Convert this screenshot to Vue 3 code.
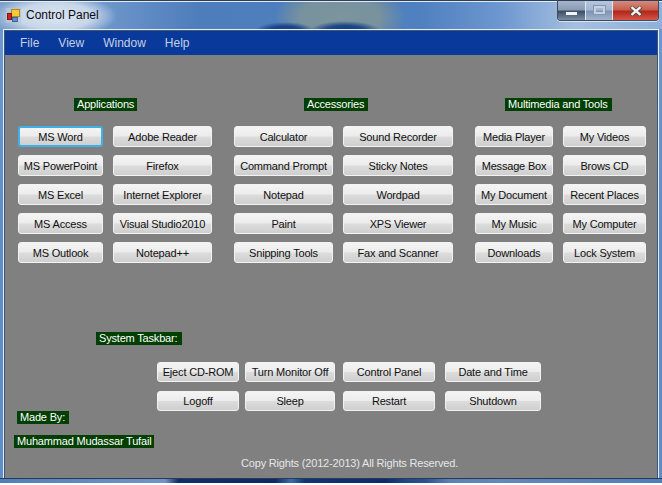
<script setup>
const groups = [
  { name: 'apps', title: 'Applications', items: ['MS Word', 'Adobe Reader', 'MS PowerPoint', 'Firefox', 'MS Excel', 'Internet Explorer', 'MS Access', 'Visual Studio2010', 'MS Outlook', 'Notepad++'] },
  { name: 'acc', title: 'Accessories', items: ['Calculator', 'Sound Recorder', 'Command Prompt', 'Sticky Notes', 'Notepad', 'Wordpad', 'Paint', 'XPS Viewer', 'Snipping Tools', 'Fax and Scanner'] },
  { name: 'media', title: 'Multimedia and Tools', items: ['Media Player', 'My Videos', 'Message Box', 'Brows CD', 'My Document', 'Recent Places', 'My Music', 'My Computer', 'Downloads', 'Lock System'] }
]
const menus = ['File', 'View', 'Window', 'Help']
const task = ['Eject CD-ROM', 'Turn Monitor Off', 'Control Panel', 'Date and Time', 'Logoff', 'Sleep', 'Restart', 'Shutdown']
</script>

<template>
  <div class="window">
    <header class="titlebar">
      <svg class="appicon" width="15" height="15" viewBox="0 0 15 15">
        <path d="M0.5 0.5H14.5V14.5H0.5Z M0.5 5H14.5 M5 0.5V14.5 M0.5 10H14.5 M10 0.5V14.5" fill="#c4d0de" fill-opacity="0.5" stroke="#b9c4d2" stroke-width="1" />
        <rect x="5.5" y="1.5" width="8" height="7" fill="#f7cb36" stroke="#b58420" stroke-width="1" />
        <rect x="1.5" y="5.5" width="4" height="6" fill="#cc241c" stroke="#7a1a14" stroke-width="1" />
        <rect x="6.5" y="9.5" width="5" height="4" fill="#5b8fd8" stroke="#3a659f" stroke-width="1" />
      </svg>
      <span class="title">Control Panel</span>
      <div class="controls">
        <div class="ctl min"><i></i></div>
        <div class="ctl max"><i></i></div>
        <div class="ctl close">
          <svg width="14" height="10" viewBox="0 0 14 10">
            <path d="M2 1 L12 9 M12 1 L2 9" stroke="#4a4a4a" stroke-width="4" />
            <path d="M2.5 1.2 L11.5 8.8 M11.5 1.2 L2.5 8.8" stroke="#f4f4f4" stroke-width="2.4" />
          </svg>
        </div>
      </div>
    </header>
    <div class="client">
      <nav class="menubar">
        <span v-for="m in menus" :key="m" class="menu">{{ m }}</span>
      </nav>
      <main class="form">
        <section class="groups">
          <div v-for="g in groups" :key="g.name" :class="['group', g.name]">
            <span class="tag">{{ g.title }}</span>
            <div class="grid">
              <button v-for="b in g.items" :key="b" :class="['btn', { focus: b === 'MS Word' }]">{{ b }}</button>
            </div>
          </div>
        </section>
        <span class="tag systag">System Taskbar:</span>
        <section class="lower">
          <div class="credits">
            <span class="tag made">Made By:</span>
            <span class="tag author">Muhammad Mudassar Tufail</span>
          </div>
          <div class="taskgrid">
            <button v-for="b in task" :key="b" class="btn">{{ b }}</button>
          </div>
        </section>
        <p class="copy">Copy Rights (2012-2013) All Rights Reserved.</p>
      </main>
    </div>
    <div class="bottomedge"></div>
  </div>
</template>

<style>
html, body { margin: 0; padding: 0; background: #fff; }
</style>

<style scoped>
.window {
  width: 662px;
  height: 485px;
  overflow: hidden;
  display: flex;
  flex-direction: column;
  font-family: "Liberation Sans", Arial, sans-serif;
  font-size: 11px;
  letter-spacing: -0.18px;
  background: linear-gradient(#6f9ad0 0, #5f8dc8 50%, #5f8dc8 100%);
  box-sizing: border-box;
}
.titlebar {
  height: 29px;
  flex: none;
  display: flex;
  align-items: flex-start;
  padding-left: 6px;
  border-top: 1px solid #2a3f5c;
  box-shadow: inset 0 1px 0 #e4ecf6;
  box-sizing: border-box;
  background:
    radial-gradient(ellipse 30px 9px at 285px 30px, #0f3c84 0, rgba(15, 60, 132, 0.85) 55%, rgba(15, 60, 132, 0) 100%),
    radial-gradient(ellipse 36px 10px at 345px 30px, #0e3b82 0, rgba(14, 59, 130, 0.85) 55%, rgba(14, 59, 130, 0) 100%),
    radial-gradient(ellipse 66px 34px at 340px 16px, #7b949e 0, #78929e 60%, rgba(120, 146, 158, 0) 100%),
    radial-gradient(ellipse 62px 22px at 55px 15px, #dbe6f2 0, #c7d6e8 60%, rgba(199, 214, 232, 0) 100%),
    linear-gradient(90deg, #7ea1cc 0, #6f97cb 100px, #4d7dbb 200px, #4f80bf 420px, #6d97cf 500px, #a5bfe0 575px, #8fb0da 100%);
}
.appicon { margin-top: 7px; flex: none; }
.title {
  margin-left: 5px;
  margin-top: 7px;
  color: #0b0b14;
  font-size: 12px;
  letter-spacing: 0;
  line-height: 15px;
}
.controls {
  margin-left: auto;
  margin-right: 3px;
  width: 102px;
  height: 20px;
  display: flex;
  border: 1px solid #3f4a5a;
  border-top: none;
  border-radius: 0 0 4px 4px;
  box-sizing: border-box;
  overflow: hidden;
  box-shadow: 0 1px 0 rgba(255, 255, 255, 0.6);
}
.ctl { display: flex; align-items: center; justify-content: center; border-right: 1px solid #dfe6ef; box-sizing: border-box; }
.min { width: 28px; background: linear-gradient(#a5b4c8 0, #8b9db4 45%, #3e5068 55%, #7a8ca4 100%); }
.min i { width: 11px; height: 3px; background: #f4f4f4; margin-top: 6px; }
.max { width: 27px; background: linear-gradient(#b5c6dc 0, #a3b7d2 45%, #7d94b4 55%, #9fb3cf 100%); }
.max i { width: 7px; height: 4px; border: 2px solid #c6d0de; outline: 1px solid #8296b0; box-sizing: content-box; margin-bottom: 2px; }
.close { flex: 1; border-right: none; background: linear-gradient(#d58a7e 0, #c9604f 45%, #b0281a 55%, #d4574a 100%); }
.client {
  flex: 1;
  margin: 0 3px;
  border: 1px solid #e6edf6;
  border-bottom: none;
  display: flex;
  flex-direction: column;
  min-height: 0;
  box-sizing: border-box;
  box-shadow: inset 0 0 0 1px #3d5674;
}
.menubar {
  height: 24px;
  flex: none;
  margin: 1px 1px 0;
  background: #0a399c;
  display: flex;
  align-items: center;
  padding-left: 15px;
  gap: 19px;
  color: #c3d0e4;
  font-size: 12px;
  letter-spacing: 0;
}
.form {
  flex: 1;
  margin: 0 1px;
  background: #808080;
  display: flex;
  flex-direction: column;
  align-items: flex-start;
  padding-top: 43px;
  min-height: 0;
}
.groups { display: flex; padding-left: 13px; gap: 22px; }
.group { display: flex; flex-direction: column; align-items: flex-start; }
.tag {
  display: block;
  height: 13px;
  line-height: 13px;
  background: #003f00;
  color: #fff;
  white-space: nowrap;
  padding: 0 3px;
  box-sizing: border-box;
}
.apps .tag { margin-left: 56px; width: 63px; }
.acc .tag { margin-left: 70px; width: 64px; }
.media .tag { margin-left: 30px; width: 107px; }
.grid {
  display: grid;
  margin-top: 15px;
  grid-auto-rows: 21px;
  row-gap: 8px;
  column-gap: 10px;
}
.apps .grid { grid-template-columns: 85px 99px; }
.acc .grid { grid-template-columns: 99px 110px; }
.media .grid { grid-template-columns: 78px 83px; }
.btn {
  font: inherit;
  letter-spacing: inherit;
  color: #101010;
  padding: 0;
  margin: 0;
  border: 1px solid #f3f3f3;
  border-radius: 3px;
  background: linear-gradient(#f4f4f4 0, #ececec 48%, #dcdcdc 52%, #cfcfcf 100%);
  white-space: nowrap;
  box-sizing: border-box;
}
.focus { border: 2px solid #3fb1e6; }
.systag { margin-left: 91px; margin-top: 69px; width: 86px; }
.lower { display: flex; margin-top: 17px; }
.credits { width: 152px; flex: none; display: flex; flex-direction: column; align-items: flex-start; padding-top: 49px; }
.made { margin-left: 12px; width: 52px; }
.author { margin-left: 9px; margin-top: 11px; width: 140px; }
.taskgrid {
  display: grid;
  grid-template-columns: 88px 98px 102px 96px;
  grid-auto-rows: 20px;
  row-gap: 9px;
  justify-items: start;
}
.taskgrid .btn:nth-child(4n + 1) { width: 82px; }
.taskgrid .btn:nth-child(4n + 2) { width: 90px; }
.taskgrid .btn:nth-child(4n + 3) { width: 92px; }
.taskgrid .btn:nth-child(4n) { width: 96px; }
.copy {
  margin: 8px 0 0 236px;
  color: #e6e6e6;
  line-height: 15px;
  white-space: nowrap;
}
.bottomedge {
  height: 7px;
  flex: none;
  box-sizing: border-box;
  border-top: 1px solid #2a3a55;
  border-bottom: 2px solid #fff;
  background: linear-gradient(90deg, #4f7fb9 0, #5f8abf 80px, #7095c6 165px, #0f2f6b 178px, #0b2a66 275px, #3a6cb0 291px, #0f3574 305px, #0a2c6a 385px, #1d4785 405px, #2a5290 425px, #5c82b4 450px, #6388ba 500px, #4e7ebb 100%);
}
</style>
